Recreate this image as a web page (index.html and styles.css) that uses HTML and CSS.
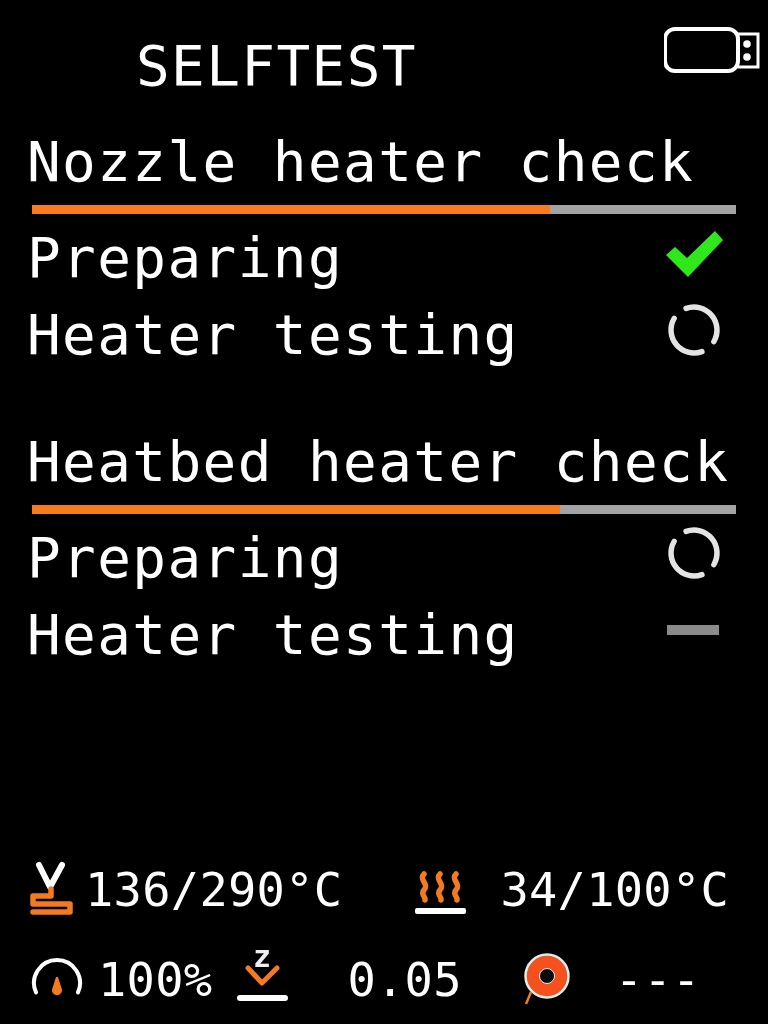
FILE: index.html
```html
<!DOCTYPE html>
<html lang="en">
<head>
  <meta charset="UTF-8">
  <meta name="viewport" content="width=device-width, initial-scale=1.0">
  <title>Selftest</title>
  <link rel="stylesheet" href="styles.css">
</head>
<body>
  <div class="screen">
    <div class="header">
      <div class="header-title">SELFTEST</div>
      <svg class="usb-icon" width="96" height="46" viewBox="0 0 96 46">
        <rect x="1" y="2" width="73" height="42" rx="10" fill="none" stroke="#fff" stroke-width="4"/>
        <path d="M74 7H94V40H74" fill="none" stroke="#fff" stroke-width="3"/>
        <circle cx="83" cy="17" r="3.8" fill="#fff"/>
        <circle cx="83" cy="30" r="3.8" fill="#fff"/>
      </svg>
    </div>

    <div class="section">
      <div class="section-title">Nozzle heater check</div>
      <div class="progress"><div class="progress-fill" style="width: 518px"></div></div>
      <div class="test-row">
        <span class="test-name">Preparing</span>
        <svg class="state-icon" width="60" height="52" viewBox="0 0 60 52">
          <path d="M3 28L12 20L24 31L52 4L60 13L25 50Z" fill="#2fe81c"/>
        </svg>
      </div>
      <div class="test-row">
        <span class="test-name">Heater testing</span>
        <svg class="state-icon" width="60" height="56" viewBox="-31 -28 60 56">
          <path d="M-7.9 -21.6A23 23 0 0 1 19.9 11.5M-19.9 -11.5A23 23 0 0 0 7.9 21.6" fill="none" stroke="#e4e4e4" stroke-width="5.5" stroke-linecap="round"/>
        </svg>
      </div>
    </div>

    <div class="section section-second">
      <div class="section-title">Heatbed heater check</div>
      <div class="progress"><div class="progress-fill" style="width: 528px"></div></div>
      <div class="test-row">
        <span class="test-name">Preparing</span>
        <svg class="state-icon" width="60" height="56" viewBox="-31 -28 60 56">
          <path d="M-7.9 -21.6A23 23 0 0 1 19.9 11.5M-19.9 -11.5A23 23 0 0 0 7.9 21.6" fill="none" stroke="#e4e4e4" stroke-width="5.5" stroke-linecap="round"/>
        </svg>
      </div>
      <div class="test-row">
        <span class="test-name">Heater testing</span>
        <svg class="state-icon" width="60" height="12" viewBox="0 0 60 12">
          <rect x="4" y="1" width="52" height="10" fill="#8a8a8a"/>
        </svg>
      </div>
    </div>

    <div class="footer">
      <div class="footer-row">
        <svg class="nozzle-icon" width="46" height="56" viewBox="0 0 46 56">
          <path d="M9 4L20 26L32 4" fill="none" stroke="#fff" stroke-width="6" stroke-linecap="round" stroke-linejoin="round"/>
          <path d="M21 28V35H3V43H40V51H3" fill="none" stroke="#f47a20" stroke-width="5.5" stroke-linejoin="round" stroke-linecap="round"/>
        </svg>
        <span class="value value-nozzle">136/290°C</span>
        <svg class="bed-icon" width="52" height="44" viewBox="0 0 52 44">
          <path d="M9 3C3 9 15 13 9 19C5 23 11 26 10 29M25 3C19 9 31 13 25 19C21 23 27 26 26 29M41 3C35 9 47 13 41 19C37 23 43 26 42 29" fill="none" stroke="#f47a20" stroke-width="5.5" stroke-linecap="round"/>
          <rect x="0" y="37" width="51" height="6" rx="2" fill="#fff"/>
        </svg>
        <span class="value value-bed">34/100°C</span>
      </div>
      <div class="footer-row">
        <svg class="gauge-icon" width="54" height="46" viewBox="0 -4 54 46">
          <path d="M6 32.4A23 23 0 1 1 48 32.4" fill="none" stroke="#fff" stroke-width="4" stroke-linecap="round"/>
          <path d="M26 17H28L31.5 28A5 5 0 1 1 22.5 28Z" fill="#f47a20"/>
        </svg>
        <span class="value value-speed">100%</span>
        <svg class="z-icon" width="52" height="64" viewBox="0 -8 52 64">
          <text class="z-letter" x="25" y="22" text-anchor="middle">z</text>
          <path d="M11 23L25 38L40 23" fill="none" stroke="#f47a20" stroke-width="5" stroke-linecap="round" stroke-linejoin="round"/>
          <rect x="0" y="50" width="51" height="6" rx="3" fill="#fff"/>
        </svg>
        <span class="value value-z">0.05</span>
        <svg class="spool-icon" width="50" height="54" viewBox="0 0 50 54">
          <circle cx="26" cy="24" r="21.5" fill="#f4511e" stroke="#d8eef2" stroke-width="2.5"/>
          <path d="M10 40L5 52" fill="none" stroke="#f47a20" stroke-width="2.5"/>
          <circle cx="26" cy="24" r="7.5" fill="#0c0c0c" stroke="#dfeef2" stroke-width="1"/>
        </svg>
        <span class="value value-filament">---</span>
      </div>
    </div>
  </div>
</body>
</html>
```

FILE: styles.css
```css
html, body {
  margin: 0;
  padding: 0;
  background-color: #000;
}
.screen {
  height: 1024px;
  width: 768px;
  box-sizing: border-box;
  display: flex;
  flex-direction: column;
  overflow: hidden;
  color: #fff;
  font-family: "DejaVu Sans Mono", "Liberation Mono", monospace;
  font-size: 56px;
  letter-spacing: 1.4px;
  filter: blur(0.6px);
}
.header {
  height: 128px;
  flex-shrink: 0;
  display: flex;
  justify-content: space-between;
  align-items: flex-start;
  padding-left: 136px;
  padding-right: 8px;
  box-sizing: border-box;
}
.header-title {
  line-height: 68px;
  margin-top: 32px;
}
.usb-icon {
  margin-top: 27px;
  margin-left: -100px;
}
.section-second {
  margin-top: 60px;
}
.section-title {
  height: 68px;
  line-height: 68px;
  padding-left: 27px;
  white-space: nowrap;
}
.progress {
  height: 9px;
  margin: 9px 32px 0;
  background-color: #a3a3a3;
}
.progress-fill {
  height: 100%;
  background-color: #f87c1e;
}
.test-row {
  height: 77px;
  display: flex;
  justify-content: space-between;
  align-items: center;
  padding: 0 45px 0 27px;
  white-space: nowrap;
}
.test-name {
  margin-top: 10px;
}
.footer {
  margin-top: auto;
  padding-left: 30px;
  font-size: 47px;
  letter-spacing: 0.3px;
}
.footer-row {
  height: 90px;
  display: flex;
  align-items: center;
  white-space: nowrap;
}
.value-nozzle {
  margin-left: 9px;
}
.bed-icon {
  margin-left: 73px;
  margin-top: 8px;
}
.value-bed {
  margin-left: 33px;
}
.value-speed {
  margin-left: 14px;
}
.z-icon {
  margin-left: 25px;
  margin-bottom: 20px;
}
.value-z {
  margin-left: 58px;
}
.spool-icon {
  margin-left: 59px;
}
.value-filament {
  margin-left: 44px;
}
.z-letter {
  font-size: 30px;
  font-weight: bold;
  letter-spacing: 0;
  fill: #eee;
}
```
